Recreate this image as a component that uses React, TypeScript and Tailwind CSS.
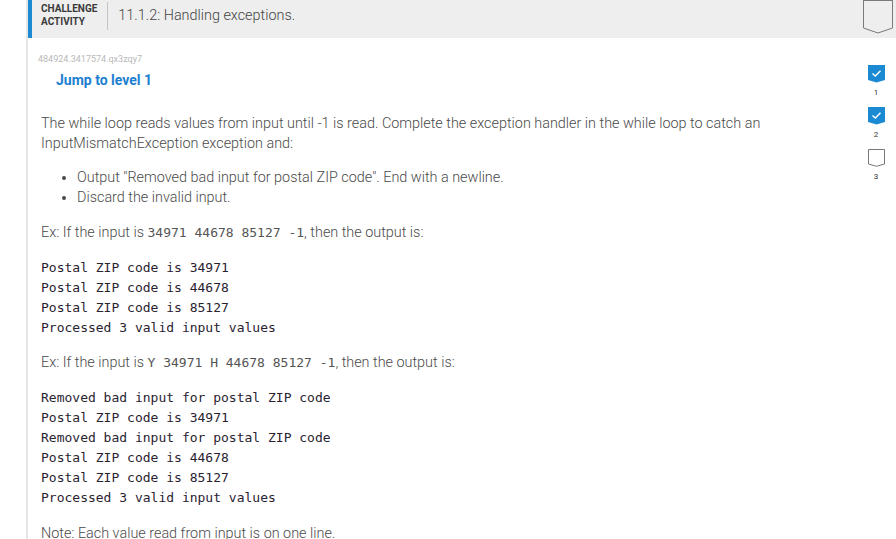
import React from "react";

const sans = { fontFamily: "Roboto, 'Liberation Sans', sans-serif" };

function Check({ done, n }: { done: boolean; n: number }) {
  return (
    <div className="flex flex-col items-center">
      <svg width="17" height="18" viewBox="0 0 17 18">
        {done ? (
          <>
            <path d="M0 0 H17 V15 L8.5 17.5 L0 15 Z" fill="#1b8ad3" />
            <path d="M4.5 8.5 L7.3 11 L12.5 5.8" stroke="white" strokeWidth="1.4" fill="none" />
          </>
        ) : (
          <path d="M0.5 0.5 H16.5 V15 L8.5 17.3 L0.5 15 Z" fill="white" stroke="#777" strokeWidth="1" />
        )}
      </svg>
      <span className="mt-[5px] text-[8px] leading-[10px] text-[#333]">{n}</span>
    </div>
  );
}

function Code({ lines }: { lines: string[] }) {
  return (
    <pre className="font-['DejaVu_Sans_Mono',monospace] text-[13px] leading-[20px] text-[#2a2230]">
      {lines.join("\n")}
    </pre>
  );
}

function Inline({ children }: { children: React.ReactNode }) {
  return <span className="font-['DejaVu_Sans_Mono',monospace] text-[13px] text-[#555]">{children}</span>;
}

export default function App() {
  return (
    <div className="h-[539px] w-[896px] overflow-hidden bg-white" style={sans}>
      <div className="ml-[26px] h-full border-l-2 border-[#e6e6e6]">
        <div className="flex h-[38px] items-stretch bg-[#eeeeee]">
          <div className="w-[4px] bg-[#1b8ad3]" />
          <div className="flex items-center pb-[8px] pl-[9px] pr-[10px] text-[10px] font-bold leading-[13px] text-[#3a3a3a]">
            CHALLENGE
            <br />
            ACTIVITY
          </div>
          <div className="mt-[2px] mb-[8px] w-px bg-[#c4c4c4]" />
          <div className="flex flex-1 items-center pb-[7px] pl-[10px] text-[14.4px] font-light text-[#444]">
            11.1.2: Handling exceptions.
          </div>
          <div className="pr-[2px]">
            <svg width="32" height="34" viewBox="0 0 32 34">
              <path d="M1.5 0 V28 L16 33 L30.5 28 V0" fill="none" stroke="#7a7a7a" strokeWidth="1" />
              <path d="M1.5 0.5 H30.5" stroke="#7a7a7a" strokeWidth="1" />
            </svg>
          </div>
        </div>

        <div className="flex">
          <div className="flex-1 pl-[10px] pt-[16px]">
            <div className="text-[9px] leading-[10px] text-[#b8b8b8]">484924.3417574.qx3zqy7</div>
            <div className="pl-[18px] pt-[8px] text-[14px] font-bold leading-[16px] text-[#1c7fd0]">Jump to level 1</div>

            <div className="pl-[3px] pt-[26px] text-[14.4px] font-light leading-[20px] text-[#4a4a4a]">
              <p className="w-[740px]">
                The while loop reads values from input until -1 is read. Complete the exception handler in the while loop to catch an InputMismatchException exception and:
              </p>
              <ul className="mt-[14px] list-disc pl-[36px]">
                <li>Output "Removed bad input for postal ZIP code". End with a newline.</li>
                <li>Discard the invalid input.</li>
              </ul>
              <p className="mt-[15px]">
                Ex: If the input is <Inline>34971 44678 85127 -1</Inline>, then the output is:
              </p>
              <div className="mt-[15px]">
                <Code
                  lines={[
                    "Postal ZIP code is 34971",
                    "Postal ZIP code is 44678",
                    "Postal ZIP code is 85127",
                    "Processed 3 valid input values",
                  ]}
                />
              </div>
              <p className="mt-[15px]">
                Ex: If the input is <Inline>Y 34971 H 44678 85127 -1</Inline>, then the output is:
              </p>
              <div className="mt-[15px]">
                <Code
                  lines={[
                    "Removed bad input for postal ZIP code",
                    "Postal ZIP code is 34971",
                    "Removed bad input for postal ZIP code",
                    "Postal ZIP code is 44678",
                    "Postal ZIP code is 85127",
                    "Processed 3 valid input values",
                  ]}
                />
              </div>
              <p className="mt-[16px]">Note: Each value read from input is on one line.</p>
            </div>
          </div>

          <div className="flex w-[28px] flex-col gap-[9px] pt-[27px] pr-[6px] box-content">
            <Check done n={1} />
            <Check done n={2} />
            <Check done={false} n={3} />
          </div>
        </div>
      </div>
    </div>
  );
}
